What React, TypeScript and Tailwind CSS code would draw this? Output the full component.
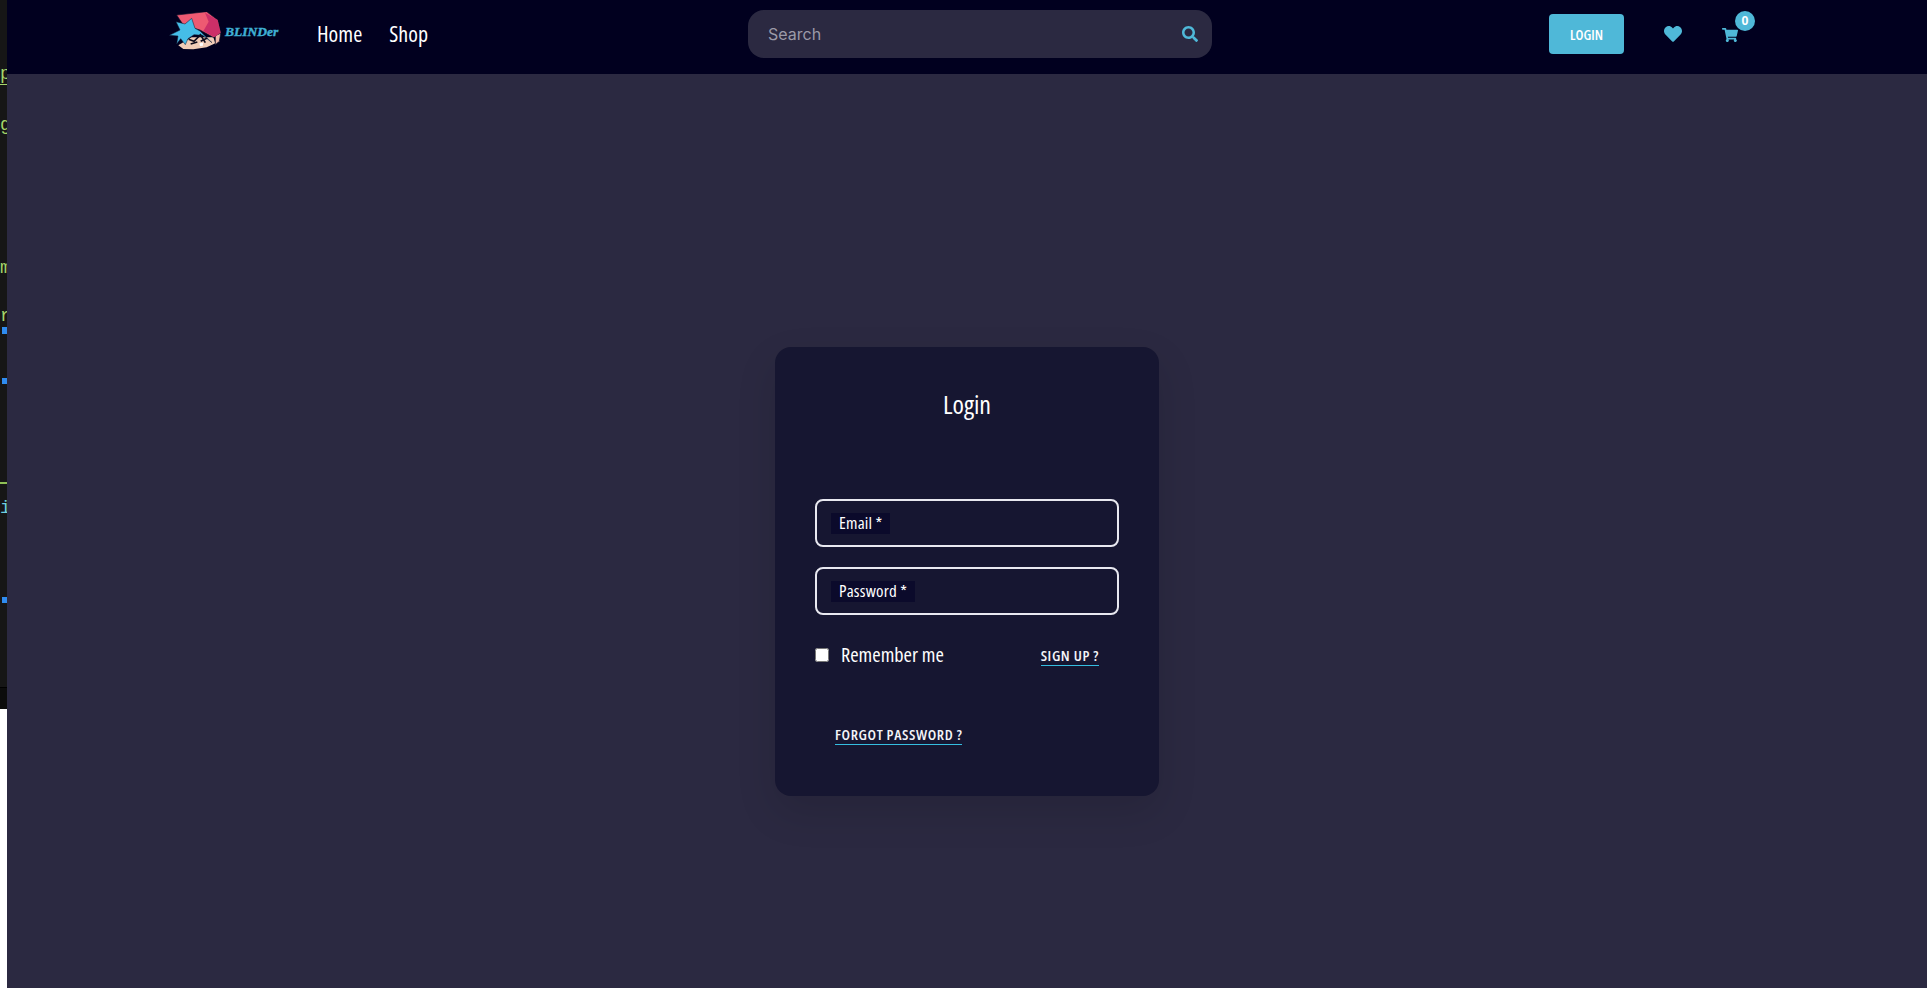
import React from "react";
import { FaHeart, FaSearch, FaShoppingCart } from "react-icons/fa";

const dosis = "font-['Open_Sans',sans-serif] [font-stretch:75%]";

const Logo = () => (
  <svg width="54" height="38" viewBox="54 36 162 114" className="shrink-0">
    <path d="M85 136 L125 112 L190 112 L196 130 L170 142 L130 148 L100 147 Z" fill="#f0cdb8" />
    <path d="M196 106 L212 100 L208 124 L196 134 Z" fill="#f0b8a8" stroke="#10142c" strokeWidth="2" />
    <path d="M80 45 L170 35 L203 60 L212 98 L190 112 L150 90 L100 75 Z" fill="#ee5a72" stroke="#10142c" strokeWidth="2" />
    <path d="M165 38 L203 60 L212 98 L193 112 L160 93 L176 65 Z" fill="#cc2f68" />
    <path d="M58 106 L90 90 L78 65 L105 72 L125 55 L135 85 L150 93 L186 128 L158 106 L132 104 L114 116 L106 134 L92 116 L80 132 L84 108 Z" fill="#45bde8" stroke="#10142c" strokeWidth="1.5" />
    <path d="M116 118 L132 124 L148 108 M150 102 L166 128 M122 132 L142 126 M152 124 L172 114" stroke="#0d0c1c" strokeWidth="5" fill="none" />
    <path d="M148 130 L160 128 L158 138 L150 138 Z" fill="#ffffff" />
  </svg>
);

const Strip = () => (
  <div className="w-[7px] shrink-0 flex flex-col h-[988px] overflow-hidden">
    <div className="h-[709px] bg-[#161616] flex flex-col font-['Liberation_Mono',monospace] text-[18px] leading-[20px]">
      <div className="mt-[64px] h-[20px] text-[#a6d66b] overflow-hidden">p</div>
      <div className="h-[1px] bg-[#a6d66b]" />
      <div className="mt-[30px] h-[20px] text-[#a6d66b] overflow-hidden">g</div>
      <div className="mt-[123px] h-[20px] text-[#a6d66b] overflow-hidden">m</div>
      <div className="mt-[28px] h-[20px] text-[#a6d66b] overflow-hidden">r</div>
      <div className="mt-[1px] ml-[2px] h-[7px] bg-[#2f8cf0]" />
      <div className="mt-[44px] ml-[2px] h-[6px] bg-[#2f8cf0]" />
      <div className="mt-[98px] h-[2px] bg-[#8fbf55]" />
      <div className="mt-[14px] h-[20px] text-[#6fd0e0] overflow-hidden">i</div>
      <div className="mt-[79px] ml-[2px] h-[6px] bg-[#2f8cf0]" />
      <div className="mt-auto h-[22px] bg-[#0c0c0c] border-t border-[#000000]" />
    </div>
    <div className="flex-1 bg-white" />
  </div>
);

const Field = ({ label }: { label: string }) => (
  <div className="h-[48px] w-[304px] border-2 border-[#e8e8f0] rounded-[8px] flex items-center pl-[14px]">
    <span className={`${dosis} h-[21px] px-[8px] bg-[#0b0a2b] text-white text-[17px] leading-[19px] tracking-[0.2px]`}>
      {label}
    </span>
  </div>
);

const LinkText = ({ children }: { children: React.ReactNode }) => (
  <a className={`${dosis} text-[#f4f4f8] text-[15px] font-semibold leading-[19px] tracking-[0.6px] border-b border-[#35bde0]`}>
    {children}
  </a>
);

export default function App() {
  return (
    <div className="flex h-[988px] w-[1927px] overflow-hidden bg-[#2b2941]">
      <Strip />
      <div className="flex-1 flex flex-col">
        <header className="h-[74px] shrink-0 bg-[#01001f] flex items-center pb-[6px]">
          <div className="ml-[161px] w-[54px] mb-[6px]">
            <Logo />
          </div>
          <span className="ml-[3px] w-[56px] text-[#3fb0d4] text-[13.5px] font-bold italic font-['Liberation_Serif',serif] [-webkit-text-stroke:0.4px_#3fb0d4] mb-[4px]">
            BLINDer
          </span>
          <nav className={`${dosis} ml-[36px] w-[111px] mb-[2px] flex justify-between text-white text-[22px]`}>
            <a>Home</a>
            <a>Shop</a>
          </nav>
          <div className="ml-[320px] w-[464px] h-[48px] rounded-[16px] bg-[#2b2941] flex items-center justify-between pl-[20px] pr-[14px]">
            <span className="text-[#9b9aa8] text-[16px] font-['Inter',sans-serif]">Search</span>
            <FaSearch className="text-[#4fb8d8] text-[16px]" />
          </div>
          <button className={`${dosis} ml-[337px] w-[75px] h-[40px] rounded-[4px] bg-[#4fb8d8] text-white text-[14px] font-semibold`}>
            LOGIN
          </button>
          <FaHeart className="ml-[40px] text-[#4fb8d8] text-[18px]" />
          <div className="ml-[40px] relative">
            <FaShoppingCart className="text-[#4fb8d8] text-[16px] mt-[2px]" />
            <span className="absolute -top-[14px] left-[13px] w-[20px] h-[20px] rounded-full bg-[#4fb8d8] text-white text-[12px] font-bold flex items-center justify-center">
              0
            </span>
          </div>
        </header>
        <main className="flex-1 pt-[273px] pl-[768px]">
          <div className="w-[384px] h-[449px] rounded-[16px] bg-[#161631] shadow-[0_16px_40px_rgba(0,0,0,0.12)] px-[40px] pt-[39px] flex flex-col">
            <h1 className={`${dosis} text-white text-[26px] leading-[36px] text-center`}>
              Login
            </h1>
            <div className="mt-[77px] flex flex-col gap-[20px]">
              <Field label="Email *" />
              <Field label="Password *" />
            </div>
            <div className="mt-[26px] flex items-center">
              <input type="checkbox" className="w-[14px] h-[14px]" readOnly />
              <span className={`${dosis} ml-[12px] text-white text-[20.3px] leading-[26px] mb-[2px]`}>
                Remember me
              </span>
              <div className="ml-auto mr-[20px]">
                <LinkText>SIGN UP ?</LinkText>
              </div>
            </div>
            <div className="mt-[53px] pl-[20px]">
              <LinkText>FORGOT PASSWORD ?</LinkText>
            </div>
          </div>
        </main>
      </div>
    </div>
  );
}
